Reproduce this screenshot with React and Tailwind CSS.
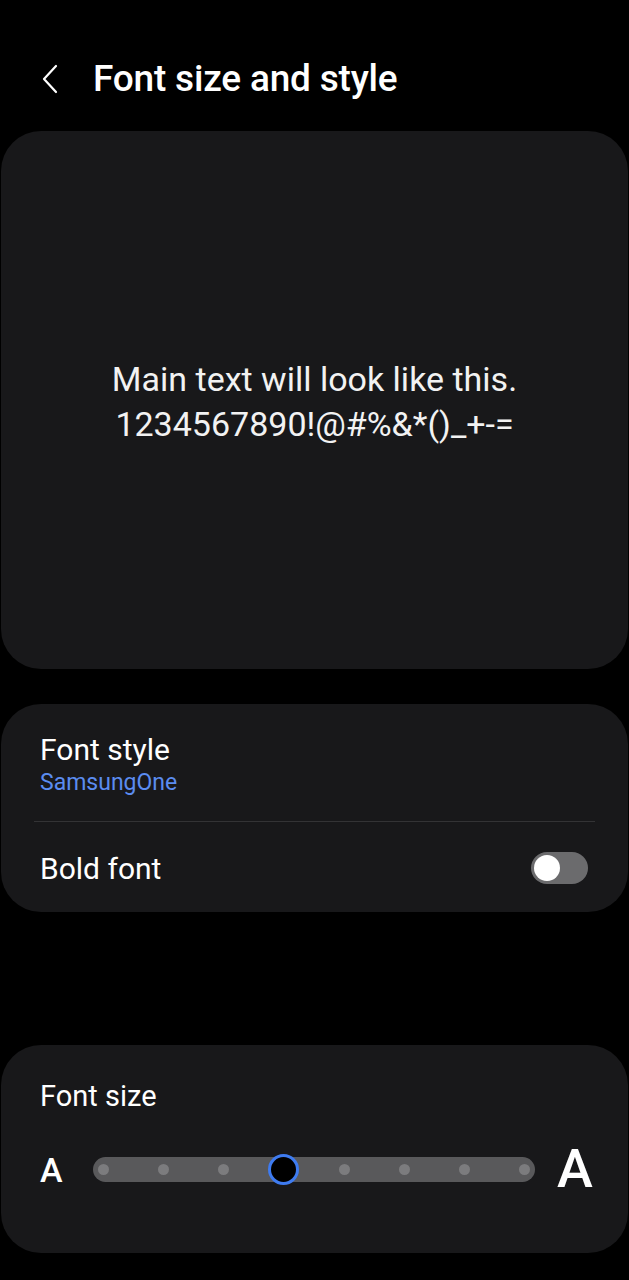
import React, { useState } from "react";

const font = { fontFamily: "Roboto, 'Noto Sans', sans-serif" };

function App() {
  const [bold, setBold] = useState(false);
  const [size, setSize] = useState(3);

  return (
    <div className="bg-black min-h-[1280px] w-[629px] text-white" style={font}>
      {/* header */}
      <div className="flex items-center h-[131px] pt-[26px]">
        <button className="w-[93px] h-[60px] flex items-center pl-[40px]">
          <svg width="20" height="32" viewBox="0 0 20 32" fill="none">
            <path d="M16 3 L4 16 L16 29" stroke="white" strokeWidth="2.2" strokeLinecap="round" strokeLinejoin="round" />
          </svg>
        </button>
        <h1 className="text-[37px] font-medium tracking-[-0.2px]">Font size and style</h1>
      </div>

      {/* preview */}
      <div className="mx-px h-[538px] rounded-[40px] bg-[#18181a] flex items-center justify-center">
        <p className="text-[34px] leading-[45px] text-center text-[#f2f2f2] pt-[4px]">
          Main text will look like this.
          <br />
          1234567890!@#%&amp;*()_+-=
        </p>
      </div>

      {/* style options */}
      <div className="mx-px mt-[35px] h-[208px] rounded-[40px] bg-[#18181a] px-[33px]">
        <div className="px-[6px] pt-[27px] h-[118px] border-b border-[#333335]">
          <div className="text-[30px] leading-[38px]">Font style</div>
          <div className="text-[23px] leading-[28px] text-[#5b8cf0]">SamsungOne</div>
        </div>
        <div className="flex items-center justify-between pl-[6px] pr-[7px] h-[90px] pt-[2px]">
          <span className="text-[30px]">Bold font</span>
          <button
            onClick={() => setBold(!bold)}
            className={`w-[57px] h-[32px] rounded-full flex items-center px-[3px] ${bold ? "bg-[#3e7bf0] justify-end" : "bg-[#6b6b6d] justify-start"}`}
          >
            <span className="w-[26px] h-[26px] rounded-full bg-white" />
          </button>
        </div>
      </div>

      {/* font size */}
      <div className="mx-px mt-[133px] h-[208px] rounded-[40px] bg-[#18181a] pl-[39px] pr-[33px] pt-[32px]">
        <div className="text-[29px] leading-[38px]">Font size</div>
        <div className="flex items-center mt-[29px] h-[50px]">
          <span className="shrink-0 text-[34px] font-medium w-[53px] leading-none pt-[2px]">A</span>
          <div className="shrink-0 w-[442px] h-[25px] rounded-full bg-[#59595b] flex items-center justify-between px-[3px]">
            {Array.from({ length: 8 }).map((_, i) => (
              <button
                key={i}
                onClick={() => setSize(i)}
                className="w-[14px] h-[14px] rounded-full flex items-center justify-center"
              >
                {i === size ? (
                  <span className="w-[31px] h-[31px] shrink-0 rounded-full bg-black border-[3px] border-[#3e7bf0]" />
                ) : (
                  <span className="w-[11px] h-[11px] rounded-full bg-[#7c7c7e]" />
                )}
              </button>
            ))}
          </div>
          <span className="shrink-0 text-[54px] font-medium ml-[22px] leading-none">A</span>
        </div>
      </div>
    </div>
  );
}

export default App;
